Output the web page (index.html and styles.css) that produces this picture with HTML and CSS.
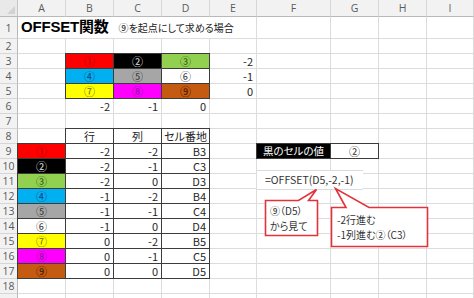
FILE: index.html
```html
<!DOCTYPE html>
<html lang="ja">
<head>
<meta charset="utf-8">
<title>OFFSET関数</title>
<link rel="stylesheet" href="styles.css">
</head>
<body>
<div class="page">
<div class="sheet">
  <div class="corner"></div>
  <div class="h">A</div><div class="h">B</div><div class="h">C</div><div class="h">D</div><div class="h">E</div><div class="h">F</div><div class="h">G</div><div class="h">H</div><div class="h">I</div>

  <div class="r">1</div>
  <div class="c title-cell"><span class="title">OFFSET関数</span><span class="subtitle">⑨を起点にして求める場合</span></div>
  <div class="c"></div><div class="c"></div><div class="c"></div><div class="c"></div>

  <div class="r">2</div>
  <div class="c"></div><div class="c"></div><div class="c"></div><div class="c"></div><div class="c"></div><div class="c"></div><div class="c"></div><div class="c"></div><div class="c"></div>

  <div class="r">3</div>
  <div class="c"></div><div class="c bx ct red">①</div><div class="c bx ct blk">②</div><div class="c bx ct grn">③</div><div class="c n">-2</div><div class="c"></div><div class="c"></div><div class="c"></div><div class="c"></div>

  <div class="r">4</div>
  <div class="c"></div><div class="c bx ct blu">④</div><div class="c bx ct gry">⑤</div><div class="c bx ct wht">⑥</div><div class="c n">-1</div><div class="c"></div><div class="c"></div><div class="c"></div><div class="c"></div>

  <div class="r">5</div>
  <div class="c"></div><div class="c bx ct yel">⑦</div><div class="c bx ct mag">⑧</div><div class="c bx ct brn">⑨</div><div class="c n">0</div><div class="c"></div><div class="c"></div><div class="c"></div><div class="c"></div>

  <div class="r">6</div>
  <div class="c"></div><div class="c n">-2</div><div class="c n">-1</div><div class="c n">0</div><div class="c"></div><div class="c"></div><div class="c"></div><div class="c"></div><div class="c"></div>

  <div class="r">7</div>
  <div class="c"></div><div class="c"></div><div class="c"></div><div class="c"></div><div class="c"></div><div class="c"></div><div class="c"></div><div class="c"></div><div class="c"></div>

  <div class="r">8</div>
  <div class="c"></div><div class="c bx ct">行</div><div class="c bx ct">列</div><div class="c bx ct">セル番地</div><div class="c"></div><div class="c"></div><div class="c"></div><div class="c"></div><div class="c"></div>

  <div class="r">9</div>
  <div class="c bx ct red">①</div><div class="c bx n">-2</div><div class="c bx n">-2</div><div class="c bx n">B3</div><div class="c"></div><div class="c bx ct blk label">黒のセルの値</div><div class="c bx ct">②</div><div class="c"></div><div class="c"></div>

  <div class="r">10</div>
  <div class="c bx ct blk">②</div><div class="c bx n">-2</div><div class="c bx n">-1</div><div class="c bx n">C3</div><div class="c"></div><div class="c"></div><div class="c"></div><div class="c"></div><div class="c"></div>

  <div class="r">11</div>
  <div class="c bx ct grn">③</div><div class="c bx n">-2</div><div class="c bx n">0</div><div class="c bx n">D3</div><div class="c"></div><div class="c"></div><div class="c"></div><div class="c"></div><div class="c"></div>

  <div class="r">12</div>
  <div class="c bx ct blu">④</div><div class="c bx n">-1</div><div class="c bx n">-2</div><div class="c bx n">B4</div><div class="c"></div><div class="c"></div><div class="c"></div><div class="c"></div><div class="c"></div>

  <div class="r">13</div>
  <div class="c bx ct gry">⑤</div><div class="c bx n">-1</div><div class="c bx n">-1</div><div class="c bx n">C4</div><div class="c"></div><div class="c"></div><div class="c"></div><div class="c"></div><div class="c"></div>

  <div class="r">14</div>
  <div class="c bx ct wht">⑥</div><div class="c bx n">-1</div><div class="c bx n">0</div><div class="c bx n">D4</div><div class="c"></div><div class="c"></div><div class="c"></div><div class="c"></div><div class="c"></div>

  <div class="r">15</div>
  <div class="c bx ct yel">⑦</div><div class="c bx n">0</div><div class="c bx n">-2</div><div class="c bx n">B5</div><div class="c"></div><div class="c"></div><div class="c"></div><div class="c"></div><div class="c"></div>

  <div class="r">16</div>
  <div class="c bx ct mag">⑧</div><div class="c bx n">0</div><div class="c bx n">-1</div><div class="c bx n">C5</div><div class="c"></div><div class="c"></div><div class="c"></div><div class="c"></div><div class="c"></div>

  <div class="r">17</div>
  <div class="c bx ct brn">⑨</div><div class="c bx n">0</div><div class="c bx n">0</div><div class="c bx n">D5</div><div class="c"></div><div class="c"></div><div class="c"></div><div class="c"></div><div class="c"></div>

  <div class="r">18</div>
  <div class="c"></div><div class="c"></div><div class="c"></div><div class="c"></div><div class="c"></div><div class="c"></div><div class="c"></div><div class="c"></div><div class="c"></div>

  <div class="r"></div>
  <div class="c"></div><div class="c"></div><div class="c"></div><div class="c"></div><div class="c"></div><div class="c"></div><div class="c"></div><div class="c"></div><div class="c"></div>
</div>

<div class="formula">=OFFSET(D5,-2,-1)</div>

<svg class="callouts" width="474" height="298" viewBox="0 0 474 298" aria-hidden="true">
  <path d="M265.5 200.5 H298.5 L316.5 189.5 L308.5 200.5 H317.5 V235.5 H265.5 Z" fill="#fff" stroke="#e3323b" stroke-width="1.6" stroke-linejoin="miter"/>
  <path d="M331.5 207.5 H346 L335.5 188.5 L369 207.5 H427.5 V246.5 H331.5 Z" fill="#fff" stroke="#e3323b" stroke-width="1.6" stroke-linejoin="miter"/>
</svg>
<div class="note note1">⑨（D5）<br>から見て</div>
<div class="note note2">-2行進む<br>-1列進む②（C3）</div>
</div>
</body>
</html>
```

FILE: styles.css
```css
html, body {
  margin: 0;
  padding: 0;
  background: #fff;
}
body {
  width: 474px;
  height: 298px;
  overflow: hidden;
}
.page {
  position: relative;
  width: 474px;
  height: 298px;
  overflow: hidden;
}
.sheet {
  display: grid;
  grid-template-columns: 18px 48px 48px 48px 48px 47px 74px 48px 48px 47px;
  grid-template-rows: 17px 22px repeat(18, 15px);
  font-family: "Noto Sans CJK JP", sans-serif;
  font-feature-settings: "palt";
  font-size: 11px;
  color: #262626;
}
.corner {
  position: relative;
  background: #e9e9e9;
  border-right: 1px solid #c6c6c6;
  border-bottom: 1px solid #b9b9b9;
}
.corner::after {
  content: "";
  position: absolute;
  right: 2px;
  bottom: 2px;
  border-left: 8px solid transparent;
  border-bottom: 8px solid #d2d2d2;
}
.h {
  box-sizing: border-box;
  background: #f2f2f2;
  border-right: 1px solid #d6d6d6;
  border-bottom: 1px solid #b9b9b9;
  font-family: "Open Sans", "Liberation Sans", sans-serif;
  font-size: 10.5px;
  color: #5a5a5a;
  text-align: center;
  line-height: 16px;
}
.r {
  box-sizing: border-box;
  background: #f2f2f2;
  border-right: 1px solid #b9b9b9;
  border-bottom: 1px solid #d6d6d6;
  font-family: "Open Sans", "Liberation Sans", sans-serif;
  font-size: 10.5px;
  color: #5a5a5a;
  text-align: center;
  display: flex;
  align-items: center;
  justify-content: center;
}
.c {
  box-sizing: border-box;
  border-right: 1px solid #dcdcdc;
  border-bottom: 1px solid #dcdcdc;
  line-height: 14px;
  padding: 0 3px;
  white-space: nowrap;
  overflow: hidden;
}
.n { text-align: right; }
.ct { text-align: center; padding: 0; }
.bx {
  border-right-color: #3c3c3c;
  border-bottom-color: #3c3c3c;
  box-shadow: -1px -1px 0 #3c3c3c, -1px 0 0 #3c3c3c, 0 -1px 0 #3c3c3c;
}
.red { background: #ff0000; color: #a80000; }
.blk { background: #000; color: #e8e8e8; }
.grn { background: #92d050; color: #2f5a1c; }
.blu { background: #00b0f0; color: #17407a; }
.gry { background: #a6a6a6; color: #333; }
.wht { background: #fff; color: #333; }
.yel { background: #ffff00; color: #6e6200; }
.mag { background: #ff00ff; color: #7a1a8c; }
.brn { background: #c55a11; color: #3a1600; }
.label { font-size: 10.5px; color: #fff; }

.title-cell {
  grid-column: span 5;
  display: flex;
  align-items: baseline;
  gap: 10px;
  padding: 0 0 0 3px;
  line-height: 20px;
  overflow: visible;
}
.title {
  font-family: "Liberation Sans", "Noto Sans CJK JP", sans-serif;
  font-weight: 700;
  font-size: 15px;
  color: #000;
  letter-spacing: -0.2px;
}
.subtitle {
  font-size: 10px;
  color: #222;
}

.formula {
  position: absolute;
  left: 257px;
  top: 170px;
  width: 106px;
  height: 20px;
  box-sizing: border-box;
  background: #fff;
  border-top: 1px solid #dadada;
  border-bottom: 1px solid #dadada;
  padding-left: 8px;
  font-family: "Noto Sans CJK JP", sans-serif;
  font-size: 10.5px;
  line-height: 18px;
  color: #333;
  white-space: nowrap;
}
.callouts {
  position: absolute;
  left: 0;
  top: 0;
}
.note {
  position: absolute;
  font-family: "Noto Sans CJK JP", sans-serif;
  font-feature-settings: "palt";
  font-size: 10px;
  line-height: 15px;
  color: #333;
  white-space: nowrap;
}
.note1 { left: 270px; top: 203px; }
.note2 { left: 337px; top: 212px; }
```
